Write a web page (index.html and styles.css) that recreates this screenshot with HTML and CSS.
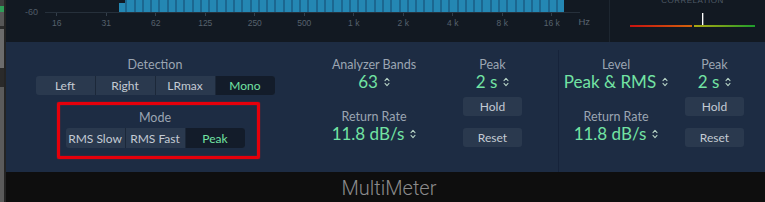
FILE: index.html
```html
<!DOCTYPE html>
<html lang="en">
<head>
<meta charset="utf-8">
<title>MultiMeter</title>
<link rel="stylesheet" href="styles.css">
</head>
<body>
<div class="app">
  <div class="edge">
    <div class="e e-top"></div>
    <div class="e e-green"></div>
    <div class="e e-grey1"></div>
    <div class="e e-dark1"></div>
    <div class="e e-grey2"></div>
    <div class="e e-dark2"></div>
    <div class="e e-grey3"></div>
  </div>
  <div class="main">
    <div class="meter">
      <div class="spectrum">
        <div class="spec-top">
          <span class="db">-60</span>
          <div class="graph">
            <div class="bars">
              <i class="bar first"></i><i class="bar"></i><i class="bar"></i><i class="bar"></i><i class="bar"></i><i class="bar"></i>
              <i class="bar"></i><i class="bar"></i><i class="bar"></i><i class="bar"></i><i class="bar"></i><i class="bar"></i>
              <i class="bar"></i><i class="bar"></i><i class="bar"></i><i class="bar"></i><i class="bar"></i><i class="bar"></i>
              <i class="bar"></i><i class="bar"></i><i class="bar"></i><i class="bar"></i><i class="bar"></i><i class="bar"></i>
              <i class="bar"></i><i class="bar"></i><i class="bar"></i><i class="bar"></i><i class="bar"></i><i class="bar"></i>
              <i class="bar"></i><i class="bar"></i><i class="bar"></i><i class="bar"></i><i class="bar"></i><i class="bar"></i>
              <i class="bar"></i><i class="bar"></i><i class="bar"></i><i class="bar"></i><i class="bar"></i><i class="bar"></i>
              <i class="bar"></i><i class="bar"></i><i class="bar"></i><i class="bar"></i><i class="bar"></i><i class="bar"></i>
              <i class="bar"></i><i class="bar"></i><i class="bar"></i><i class="bar"></i><i class="bar"></i><i class="bar"></i>
            </div>
          </div>
        </div>
        <div class="scale">
          <div class="tick-cell"><i class="tick"></i><span>16</span></div>
          <div class="tick-cell"><i class="tick"></i><span>31</span></div>
          <div class="tick-cell"><i class="tick"></i><span>62</span></div>
          <div class="tick-cell"><i class="tick"></i><span>125</span></div>
          <div class="tick-cell"><i class="tick"></i><span>250</span></div>
          <div class="tick-cell"><i class="tick"></i><span>500</span></div>
          <div class="tick-cell"><i class="tick"></i><span>1 k</span></div>
          <div class="tick-cell"><i class="tick"></i><span>2 k</span></div>
          <div class="tick-cell"><i class="tick"></i><span>4 k</span></div>
          <div class="tick-cell"><i class="tick"></i><span>8 k</span></div>
          <div class="tick-cell"><i class="tick"></i><span>16 k</span></div>
          <span class="hz">Hz</span>
        </div>
      </div>
      <div class="corr">
        <div class="corr-title">CORRELATION</div>
        <div class="corr-track"><i class="corr-marker"></i></div>
      </div>
    </div>

    <div class="panel">
      <div class="col col-left">
        <div class="label">Detection</div>
        <div class="seg seg-det">
          <span class="seg-item">Left</span>
          <span class="seg-item">Right</span>
          <span class="seg-item">LRmax</span>
          <span class="seg-item on">Mono</span>
        </div>
        <div class="highlight">
          <div class="label">Mode</div>
          <div class="seg seg-mode">
            <span class="seg-item">RMS Slow</span>
            <span class="seg-item">RMS Fast</span>
            <span class="seg-item on">Peak</span>
          </div>
        </div>
      </div>

      <div class="col col-mid">
        <div class="group g-bands">
          <div class="label">Analyzer Bands</div>
          <div class="value">63<svg class="stepper" viewBox="0 0 6 10"><path d="M1 3.6 L3 1.4 L5 3.6 M1 6.4 L3 8.6 L5 6.4"/></svg></div>
          <div class="label second">Return Rate</div>
          <div class="value">11.8 dB/s<svg class="stepper" viewBox="0 0 6 10"><path d="M1 3.6 L3 1.4 L5 3.6 M1 6.4 L3 8.6 L5 6.4"/></svg></div>
        </div>
        <div class="group g-peak">
          <div class="label">Peak</div>
          <div class="value">2 s<svg class="stepper" viewBox="0 0 6 10"><path d="M1 3.6 L3 1.4 L5 3.6 M1 6.4 L3 8.6 L5 6.4"/></svg></div>
          <div class="btn hold">Hold</div>
          <div class="btn reset">Reset</div>
        </div>
      </div>

      <div class="col col-right">
        <div class="group g-level">
          <div class="label">Level</div>
          <div class="value">Peak &amp; RMS<svg class="stepper" viewBox="0 0 6 10"><path d="M1 3.6 L3 1.4 L5 3.6 M1 6.4 L3 8.6 L5 6.4"/></svg></div>
          <div class="label second">Return Rate</div>
          <div class="value">11.8 dB/s<svg class="stepper" viewBox="0 0 6 10"><path d="M1 3.6 L3 1.4 L5 3.6 M1 6.4 L3 8.6 L5 6.4"/></svg></div>
        </div>
        <div class="group g-peak">
          <div class="label">Peak</div>
          <div class="value">2 s<svg class="stepper" viewBox="0 0 6 10"><path d="M1 3.6 L3 1.4 L5 3.6 M1 6.4 L3 8.6 L5 6.4"/></svg></div>
          <div class="btn hold">Hold</div>
          <div class="btn reset">Reset</div>
        </div>
      </div>
    </div>

    <div class="footer">MultiMeter</div>
  </div>
</div>
</body>
</html>
```

FILE: styles.css
```css
* { box-sizing: border-box; }

html, body {
  margin: 0;
  padding: 0;
  width: 765px;
  height: 202px;
  overflow: hidden;
  background: #0e0e0e;
  font-family: "Lato", "Noto Sans", sans-serif;
}

.app {
  display: flex;
  width: 765px;
  height: 202px;
}

/* left window edge */
.edge {
  width: 6px;
  display: flex;
  flex-direction: column;
  border-right: 2px solid #242424;
}
.e { width: 4px; }
.e-top { height: 6px; background: #3d3d3d; }
.e-green { height: 6px; background: #2f9d58; }
.e-grey1 { height: 14px; background: #575757; }
.e-dark1 { height: 3px; background: #2c2c2c; }
.e-grey2 { height: 39px; background: #6c6c6c; }
.e-dark2 { height: 19px; background: #2a2a2a; }
.e-grey3 { flex: 1; background: #5b5b5b; }

.main {
  flex: 1;
  display: flex;
  flex-direction: column;
}

/* ---------- meter strip ---------- */
.meter {
  height: 42px;
  background: #121922;
  display: flex;
  overflow: hidden;
}

.spectrum {
  width: 603px;
  display: flex;
  flex-direction: column;
  font-family: "Liberation Sans", sans-serif;
  color: #56616d;
}

.spec-top {
  display: flex;
  align-items: flex-end;
  height: 13px;
}

.db {
  width: 39px;
  padding-right: 7px;
  text-align: right;
  font-size: 9px;
  line-height: 10px;
  margin-bottom: -4px;
  color: #505b67;
}

.graph {
  width: 535px;
  height: 13px;
  padding: 0 16px 0 74px;
  border-bottom: 1px solid #26303b;
}

.bars {
  display: flex;
  align-items: flex-end;
  height: 12px;
}

.bar {
  flex: 1;
  height: 12px;
  background: #2487b3;
}
.bar + .bar { border-left: 2px solid #1c6790; }
.bar.first { height: 9px; }

.scale {
  display: flex;
  padding-left: 26px;
}

.tick-cell {
  width: 49.5px;
  display: flex;
  flex-direction: column;
  align-items: center;
}

.tick {
  width: 1px;
  height: 3px;
  background: #333e4a;
}

.tick-cell span {
  margin-top: 2px;
  font-size: 8.5px;
  line-height: 10px;
  white-space: nowrap;
}

.hz {
  margin-left: 2px;
  padding-top: 3px;
  font-size: 9.5px;
  line-height: 12px;
  color: #5a6572;
}

.corr {
  flex: 1;
  border-left: 1px solid #1d2630;
  padding: 0 10px 0 20px;
  display: flex;
  flex-direction: column;
}

.corr-title {
  margin-top: -3px;
  height: 8px;
  font-family: "Liberation Sans", sans-serif;
  font-size: 8px;
  line-height: 8px;
  letter-spacing: 0.5px;
  text-align: center;
  color: #4f5a66;
}

.corr-track {
  position: relative;
  margin-top: 20px;
  height: 2px;
  background: linear-gradient(to right,
    #c9120f 0%, #cf4a0e 35%, #d2650d 50%,
    #121922 50%, #121922 51.2%,
    #a9a712 51.2%, #6ea21b 75%, #1d9e2d 100%);
}

.corr-marker {
  position: absolute;
  left: 72px;
  bottom: 2px;
  width: 1px;
  height: 12px;
  background: #ffffff;
  box-shadow: 1px 0 0 rgba(255, 255, 255, 0.35);
}

/* ---------- control panel ---------- */
.panel {
  height: 130px;
  background: #1d2c43;
  display: flex;
}

.col {
  display: flex;
  padding-top: 16px;
}

.col-left {
  width: 298px;
  flex-direction: column;
  align-items: center;
}

.col-mid {
  width: 254px;
  padding-left: 20px;
  gap: 39px;
}

.col-right {
  flex: 1;
  margin-top: 8px;
  padding-top: 8px;
  padding-left: 2px;
  gap: 14px;
  border-left: 1px solid #16233a;
}

.label {
  font-size: 12.5px;
  line-height: 14px;
  color: #9ba5b2;
  white-space: nowrap;
}

.seg {
  display: flex;
  margin-top: 4px;
  height: 19px;
  border-radius: 3px;
  overflow: hidden;
  background: #2a394e;
}

.seg-det { width: 239px; }
.seg-mode { width: 179px; height: 20px; margin-top: 3px; }

.seg-item {
  flex: 1;
  display: flex;
  align-items: center;
  justify-content: center;
  font-size: 12px;
  color: #c4cbd4;
  white-space: nowrap;
}
.seg-item + .seg-item { border-left: 1px solid #1c2839; }
.seg-item.on {
  background: #131c2a;
  color: #72e3a3;
}

.highlight {
  margin-top: 7px;
  margin-left: 7px;
  width: 203px;
  padding: 6px 7px 8px 0;
  border: 3px solid #e6000b;
  border-radius: 2px;
  box-shadow: 0 0 1px #ff1a1a, inset 0 0 1px #ff1a1a;
  display: flex;
  flex-direction: column;
  align-items: center;
}

.group {
  display: flex;
  flex-direction: column;
  align-items: center;
}

.g-bands { width: 100px; }
.g-level { width: 110px; }
.g-peak { width: 59px; }

.value {
  display: flex;
  align-items: center;
  font-size: 17px;
  line-height: 20px;
  color: #72e3a3;
  white-space: nowrap;
}

.stepper {
  width: 6px;
  height: 10px;
  margin-left: 6px;
  fill: none;
  stroke: #b3cfc2;
  stroke-width: 1.1;
  stroke-linecap: round;
  stroke-linejoin: round;
}

.label.second { margin-top: 18px; }

.btn {
  width: 59px;
  height: 19px;
  border-radius: 3px;
  background: #2a394e;
  display: flex;
  align-items: center;
  justify-content: center;
  font-size: 12px;
  color: #c4cbd4;
}
.btn.hold { margin-top: 5px; }
.btn.reset { margin-top: 12px; }

/* ---------- footer ---------- */
.footer {
  flex: 1;
  padding-top: 2px;
  padding-left: 7px;
  text-align: center;
  font-family: "Roboto", sans-serif;
  font-weight: 300;
  font-size: 20px;
  line-height: 28px;
  color: #8b8b8b;
  background: #0e0e0e;
}
```
